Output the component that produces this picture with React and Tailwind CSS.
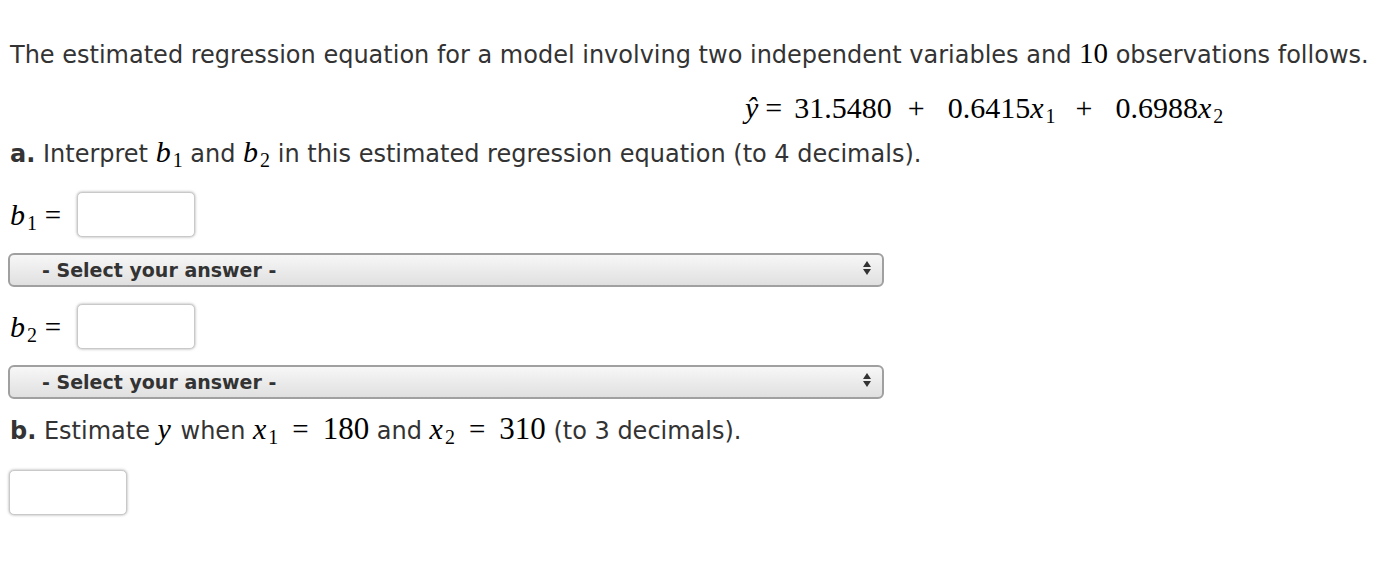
import { useState } from 'react';

const serif = "font-['Liberation_Serif',serif] text-black";

function M({ children, className = '' }) {
  return <span className={`${serif} text-[29px] ${className}`}>{children}</span>;
}

// relation sign with the wide spacing of typeset math
function Eq() {
  return <M className="mx-[14px]">=</M>;
}

// italic variable with optional subscript
function V({ name, sub }) {
  return (
    <span className={`${serif} text-[30px]`}>
      <i className="pr-[2px]">{name}</i>
      {sub && <sub className="text-[20px] not-italic">{sub}</sub>}
    </span>
  );
}

function AnswerBox({ className = '' }) {
  const [value, setValue] = useState('');
  return (
    <input
      value={value}
      onChange={(e) => setValue(e.target.value)}
      className={`w-[118px] h-[45px] rounded-[5px] border border-[#c9c9c9] bg-white shadow-[0_0_3px_rgba(0,0,0,0.35)] outline-none px-2 ${className}`}
    />
  );
}

function AnswerSelect() {
  return (
    <div className="relative w-[876px] h-[34px] ml-[-2px]">
      <select
        defaultValue=""
        className="appearance-none w-full h-full rounded-[6px] border-2 border-[#a0a0a0] bg-gradient-to-b from-[#f7f7f7] to-[#e0e0e0] pl-[32px] text-[19px] font-bold text-[#333] font-['DejaVu_Sans',sans-serif] outline-none"
      >
        <option value="">- Select your answer -</option>
      </select>
      <svg className="absolute right-[13px] top-[10px] pointer-events-none" width="8" height="14" viewBox="0 0 8 14">
        <path d="M4 0 L8 6 L0 6 Z" fill="#333" />
        <path d="M4 14 L8 8 L0 8 Z" fill="#333" />
      </svg>
    </div>
  );
}

export default function App() {
  return (
    <div className="w-[1398px] h-[574px] bg-white text-[#333] font-['DejaVu_Sans',sans-serif] text-[24px] px-[10px] pt-[36px]">
      <p className="leading-[34px] h-[34px]">
        The estimated regression equation for a model involving two independent variables and <M>10</M> observations follows.
      </p>

      {/* fitted equation */}
      <div className={`flex items-baseline pl-[735px] mt-[15px] h-[34px] ${serif} text-[30px]`}>
        <i>ŷ</i>
        <span className="ml-[7px]">=</span>
        <span className="ml-[12px]">31.5480</span>
        <span className="ml-[16px]">+</span>
        <span className="ml-[23px]">0.6415</span>
        <i className="pr-[2px]">x</i>
        <sub className="text-[20px]">1</sub>
        <span className="ml-[20px]">+</span>
        <span className="ml-[23px]">0.6988</span>
        <i className="pr-[2px]">x</i>
        <sub className="text-[20px]">2</sub>
      </div>

      <p className="leading-[34px] h-[34px] mt-[16px]">
        <b>a.</b> Interpret <V name="b" sub="1" /> and <V name="b" sub="2" /> in this estimated regression equation (to 4 decimals).
      </p>

      <div className="flex items-center h-[45px] mt-[23px]">
        <span className="w-[67px]">
          <V name="b" sub="1" /> <M>=</M>
        </span>
        <AnswerBox />
      </div>

      <div className="mt-[14px]">
        <AnswerSelect />
      </div>

      <div className="flex items-center h-[45px] mt-[19px]">
        <span className="w-[67px]">
          <V name="b" sub="2" /> <M>=</M>
        </span>
        <AnswerBox />
      </div>

      <div className="mt-[14px]">
        <AnswerSelect />
      </div>

      <p className="leading-[34px] h-[34px] mt-[15px]">
        <b>b.</b> Estimate <V name="y" /> when <V name="x" sub="1" /><Eq /><M className="text-[31px]">180</M> and <V name="x" sub="2" /><Eq /><M className="text-[31px]">310</M> (to 3 decimals).
      </p>

      <div className="mt-[24px]">
        <AnswerBox className="ml-[-1px]" />
      </div>
    </div>
  );
}
